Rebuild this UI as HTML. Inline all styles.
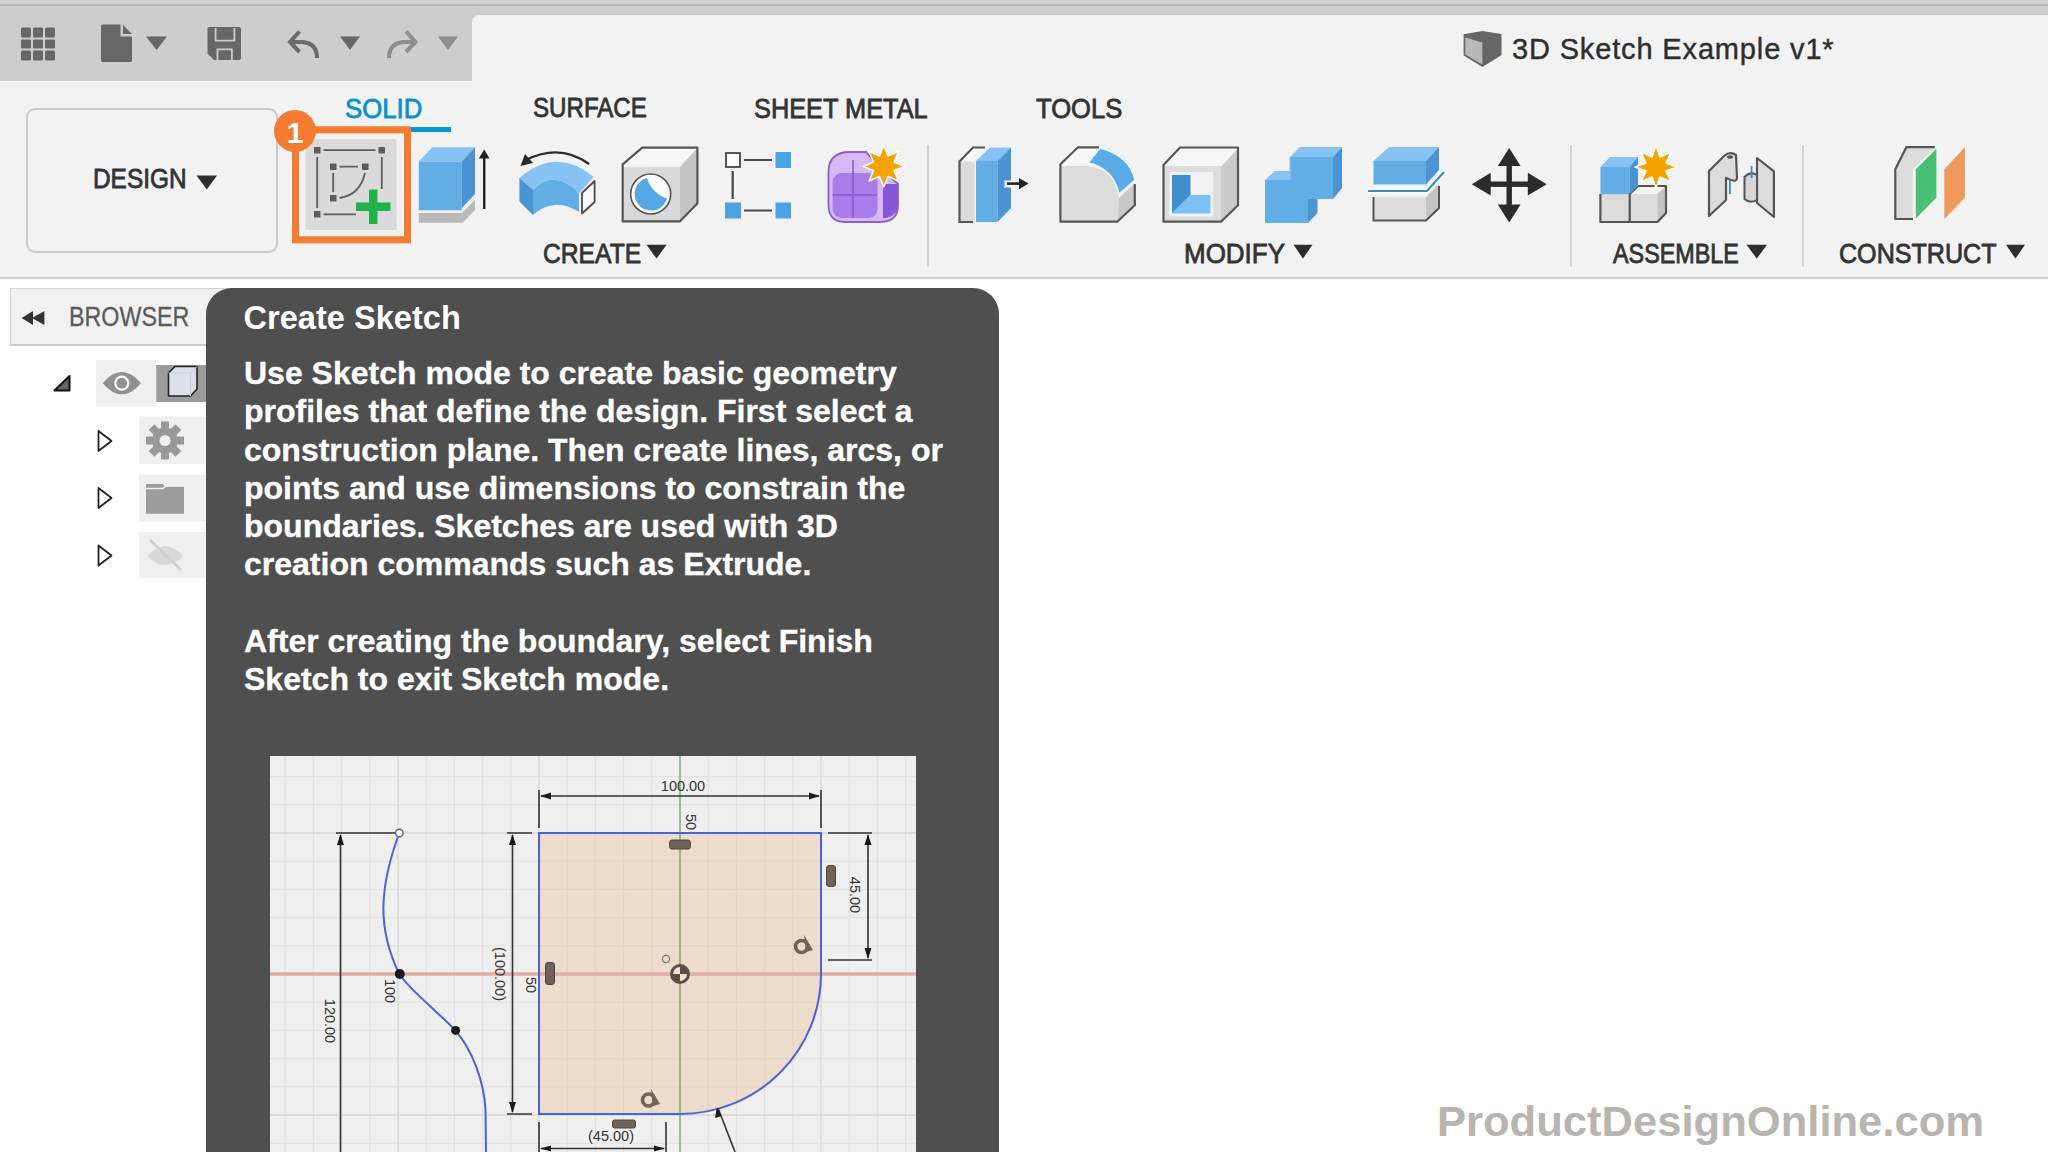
<!DOCTYPE html>
<html><head><meta charset="utf-8">
<style>
html,body{margin:0;padding:0;}
body{width:2048px;height:1152px;overflow:hidden;position:relative;background:#ffffff;font-family:"Liberation Sans",sans-serif;}
.a{position:absolute;white-space:nowrap;}
#topbar{left:0;top:0;width:2048px;height:81px;background:#cdcdcd;}
#topline{left:0;top:4px;width:2048px;height:2px;background:#b4b4b4;}
#toptop{left:0;top:0;width:2048px;height:4px;background:#d2d2d2;}
#tab{left:472px;top:15px;width:1576px;height:70px;background:#f2f2f2;border-top-left-radius:7px;}
#toolbar{left:0;top:81px;width:2048px;height:196px;background:#f2f2f2;}
#tbline{left:0;top:277px;width:2048px;height:1.5px;background:#d0d0d0;}
#design{left:26px;top:108px;width:248px;height:141px;border:2px solid #cacaca;border-radius:9px;background:#f2f2f2;}
.lb{font-size:27px;line-height:30px;transform-origin:0 0;-webkit-text-stroke:0.8px currentColor;}
.tt{color:#ffffff;font-weight:bold;font-size:32px;line-height:38.2px;-webkit-text-stroke:0.35px #fff;}
#tip{left:206px;top:288px;width:793px;height:900px;background:#4f4f4f;border-radius:26px;}
#browser{left:10px;top:288px;width:230px;height:55px;background:#f1f1f1;border:1px solid #d4d4d4;border-bottom:2px solid #cbcbcb;}
#wm{font-size:42.5px;transform-origin:0 0;transform:scaleX(1.025);font-weight:bold;color:#b8b4af;line-height:50px;}
</style></head><body>
<div class="a" id="topbar"></div>
<div class="a" id="toptop"></div>
<div class="a" id="topline"></div>
<div class="a" id="tab"></div>
<div class="a" id="toolbar"></div>
<div class="a" id="tbline"></div>
<div class="a" id="design"></div>
<svg class="a" style="left:0;top:0;" width="2048" height="290" viewBox="0 0 2048 290">
<!-- top bar icons -->
<g fill="#676767">
<rect x="21" y="27.5" width="10" height="10" rx="1.5"/><rect x="33" y="27.5" width="10" height="10" rx="1"/><rect x="45" y="27.5" width="10" height="10" rx="1.5"/>
<rect x="21" y="39.5" width="10" height="9" rx="1"/><rect x="33" y="39.5" width="10" height="9" rx="1"/><rect x="45" y="39.5" width="10" height="9" rx="1"/>
<rect x="21" y="50.5" width="10" height="10" rx="1.5"/><rect x="33" y="50.5" width="10" height="10" rx="1"/><rect x="45" y="50.5" width="10" height="10" rx="1.5"/>
<path d="M101,26 Q101,24.5 102.5,24.5 L120.5,24.5 L120.5,36.5 L132,36.5 L132,60.5 Q132,62 130.5,62 L102.5,62 Q101,62 101,60.5 Z"/>
<path d="M123,25 L132,34 L123,34 Z"/>
<path d="M146,36.5 L167,36.5 L156.5,50 Z"/>
<path d="M207.5,29 Q207.5,27 209.5,27 L239,27 Q241,27 241,29 L241,58 Q241,60 239,60 L214,60 L207.5,53.5 Z"/>
<path d="M340,36.5 L360,36.5 L350,50 Z"/>
</g>
<path d="M215.6,28 L215.6,40.6 L234.4,40.6 L234.4,28" fill="none" stroke="#cdcdcd" stroke-width="1.8"/>
<path d="M217.5,60 L217.5,49.4 L231.9,49.4 L231.9,60" fill="none" stroke="#cdcdcd" stroke-width="1.8"/>
<path d="M299.5,31.5 L290,42 L299.5,52 M291,42 L302,42 Q317,43 317,58" fill="none" stroke="#6b6b6b" stroke-width="4"/>
<path d="M406,31.5 L415.5,42 L406,52 M414.5,42 L404,42 Q389,43 389,58" fill="none" stroke="#8e8e8e" stroke-width="4"/>
<path d="M438,36.5 L458,36.5 L448,50 Z" fill="#8e8e8e"/>
<!-- title cube -->
<path d="M1482.3,31 L1463.6,34.3 L1463.6,55.5 L1482.5,67 L1501.5,55 L1501.5,33.9 Z" fill="#666"/>
<path d="M1465.3,37.5 L1482.3,42.6 L1482.3,64.5 L1465.3,54.5 Z" fill="#b9b9b9"/>

<!-- solid underline -->
<rect x="318" y="127" width="133" height="5" fill="#0a94d6"/>
<!-- sketch icon -->
<rect x="305.5" y="139" width="91" height="91" fill="#dadada"/>
<g fill="#5e5e5e">
<rect x="314" y="147" width="6.5" height="6.5"/><rect x="378.5" y="147" width="6.5" height="6.5"/><rect x="314" y="211" width="6.5" height="6.5"/>
<rect x="330" y="163.5" width="6.5" height="6.5"/><rect x="362" y="163.5" width="6.5" height="6.5"/><rect x="330" y="195" width="6.5" height="6.5"/>
</g>
<path d="M323.5,150.2 L375.5,150.2 M317.2,157 L317.2,208 M323.5,214.3 L356,214.3 M381.8,157 L381.8,189 M339.5,166.7 L358,166.7 M333.2,173 L333.2,192 M339.5,198 Q360,195 365,173" fill="none" stroke="#5e5e5e" stroke-width="1.8"/>
<path d="M356,202.5 h13 v-13 h8.5 v13 h13 v8.5 h-13 v13 h-8.5 v-13 h-13 Z" fill="#22b14c"/>
<!-- orange highlight box -->
<rect x="295.5" y="129.8" width="112" height="110" fill="none" stroke="#f47b30" stroke-width="7"/>
<circle cx="295" cy="131" r="21" fill="#f47b30"/>
<text x="295" y="142.5" text-anchor="middle" font-family="Liberation Sans" font-weight="bold" font-size="30" fill="#fff">1</text>

<!-- extrude -->
<path d="M418.8,213 L461.8,213 L475,200 L475,210 L462.5,222.7 L418.8,222.7 Z" fill="#b9b9b9"/>
<path d="M418.8,161.4 L432.5,147.2 L475,147.2 L461.8,161.4 Z" fill="#86c3f2"/>
<path d="M418.8,161.4 L461.8,161.4 L461.8,210.2 L418.8,210.2 Z" fill="#63ade6"/>
<path d="M461.8,161.4 L475,147.2 L475,194 L461.8,208 Z" fill="#4a94d4"/>
<path d="M484.2,209 L484.2,157" stroke="#222" stroke-width="2.4"/>
<path d="M478.8,158.5 L489.6,158.5 L484.2,149.6 Z" fill="#222"/>
<!-- revolve -->
<path d="M589,164 Q560,143 526,160" fill="none" stroke="#2a2a2a" stroke-width="2.4"/>
<path d="M520.5,166 L525,154 L533,163 Z" fill="#2a2a2a"/>
<path d="M519.4,178 Q556.5,146 593.6,177 L578.9,193.6 Q556,168 533,189.7 Z" fill="#86c3f2"/>
<path d="M533,189.7 Q556,168 578.9,193.6 L579,212 Q554,196 533,215 Z" fill="#63ade6"/>
<path d="M519.4,178 L533,189.7 L533,215 L519.4,201.4 Z" fill="#4a94d4"/>
<path d="M582,193 L594.6,181 L594.6,202 L582,213.5 Z" fill="#fafafa" stroke="#4a4a4a" stroke-width="1.8" stroke-linejoin="round"/>
<!-- hole -->
<path d="M623.5,165 L642.5,148.5 L697,148.5 L680,167 Z" fill="#f6f6f6"/>
<path d="M623.5,167 L680,167 L680,221 L623.5,221 Z" fill="#d9d9d9"/>
<path d="M680,167 L697,148.5 L697,203 L680,221 Z" fill="#c4c4c4"/>
<path d="M622.7,164.3 L642.2,147.7 L697.4,147.7 L697.4,203.4 L679.8,221.4 L622.7,221.4 Z" fill="none" stroke="#555" stroke-width="2.2" stroke-linejoin="round"/>
<circle cx="650.7" cy="194" r="20" fill="#fbfbfb" stroke="#555" stroke-width="1.6"/>
<path d="M647,178 A16.5,16.5 0 1 0 667,198.5 A30,30 0 0 1 647,178 Z" fill="#55a7e6"/>
<!-- rect pattern -->
<rect x="726" y="153" width="14" height="14" fill="#fff" stroke="#555" stroke-width="2"/>
<g fill="#4ba3e3"><rect x="775.5" y="152" width="15.5" height="16"/><rect x="725" y="202.5" width="16" height="16"/><rect x="775.5" y="202.5" width="15.5" height="16"/></g>
<path d="M744,160 L772,160 M732.7,171 L732.7,199 M744,210.5 L772,210.5" stroke="#474747" stroke-width="2.2"/>
<!-- form -->
<path d="M828.5,172 Q828.5,152 850,152 L866,152 L878,166 L898,184 L898,205 Q898,222 880,222 L845,222 Q828.5,222 828.5,205 Z" fill="#d9b8fa" stroke="#8c5fc8" stroke-width="1.8"/>
<rect x="832.6" y="173" width="45" height="45" rx="9" fill="#a97cea"/>
<path d="M883,184 L898,184 L898,205 Q898,215 886,218 L883,218 Z" fill="#8756d6"/>
<path d="M853,160 L853,218 M832.6,195 L877,195" stroke="#8558cc" stroke-width="1.5"/>
<polygon points="883.8,147.5 888,158 898.5,153.5 894,164 904.5,168.5 894,172.5 898.5,183 888,178.5 883.8,189 879.5,178.5 869,183 873.5,172.5 863,168.5 873.5,164 869,153.5 879.5,158" fill="#f5a300" stroke="#fff" stroke-width="1.5" stroke-linejoin="round" transform="translate(0,-2)"/>
<!-- divider -->
<rect x="927.2" y="145" width="1.6" height="122" fill="#cbcbcb"/>
<rect x="1570.2" y="145" width="1.6" height="122" fill="#cbcbcb"/>
<rect x="1802.2" y="145" width="1.6" height="122" fill="#cbcbcb"/>
<!-- press pull -->
<path d="M959.5,161.5 L973,147.5 L985,147.5 L975,161.5 Z" fill="#f6f6f6"/>
<path d="M959.5,161.5 L975,161.5 L975,222 L959.5,222 Z" fill="#dcdcdc"/>
<path d="M985,147.5 L973,147.5 L959.5,161.5 L959.5,222 L973,222" fill="none" stroke="#555" stroke-width="2.2"/>
<path d="M976,161 L990,147.5 L1011,147.5 L1011,208 L997.6,222 L976,222 Z" fill="none" stroke="#eef7ff" stroke-width="2.5" stroke-linejoin="round"/>
<path d="M976,161 L990,147.5 L1011,147.5 L997.6,161 Z" fill="#86c3f2"/>
<rect x="976" y="161" width="21.6" height="61" fill="#63ade6"/>
<path d="M997.6,161 L1011,147.5 L1011,208 L997.6,222 Z" fill="#4a94d4"/>
<rect x="1004.5" y="180.5" width="7" height="7" fill="#f4f9ff"/>
<path d="M1007,183.6 L1020,183.6" stroke="#222" stroke-width="2.6"/>
<path d="M1019,178 L1028.5,183.6 L1019,189.2 Z" fill="#222"/>
<!-- fillet -->
<path d="M1062,165.5 L1078.5,148.5 L1099,148.5 L1088,163 Z" fill="#f6f6f6"/>
<path d="M1061.5,166 L1088,166 Q1116,170 1119,198 L1119,221 L1061.5,221 Z" fill="#dcdcdc"/>
<path d="M1119,198 L1134,184 L1134,205 L1118,221 Z" fill="#c8c8c8"/>
<path d="M1088,163 L1100,148 Q1130,156 1135,180 L1119,194 Q1113,168 1088,163 Z" fill="#5aaae6" stroke="#eaf6ff" stroke-width="1.5"/>
<path d="M1099,147.3 L1078,147.3 L1060.4,164.3 L1060.4,221.7 L1117.2,221.7 L1134.8,205.3 L1134.8,184" fill="none" stroke="#555" stroke-width="2.2" stroke-linejoin="round"/>
<!-- shell -->
<path d="M1164,165 L1180,148.5 L1238,148.5 L1221,167 Z" fill="#f6f6f6"/>
<rect x="1164" y="166" width="57" height="55" fill="#dcdcdc"/>
<path d="M1221,167 L1238,148.5 L1238,205 L1221,221 Z" fill="#cacaca"/>
<rect x="1170" y="172.5" width="42.7" height="43.4" fill="#f2f2f2" stroke="#eaf6ff" stroke-width="1"/>
<path d="M1172,175 L1190.5,175 L1190.5,195 L1172,213.5 Z" fill="#3f8fd0"/>
<path d="M1172,213.5 L1190.5,195 L1210.5,195 L1210.5,213.5 Z" fill="#7cc0f5"/>
<path d="M1163.5,164.9 L1180,147.5 L1238,147.5 L1238,205.3 L1221,221.7 L1163.5,221.7 Z" fill="none" stroke="#555" stroke-width="2.2" stroke-linejoin="round"/>
<!-- combine -->
<path d="M1290,157 L1300,147 L1342,147 L1333,157 Z" fill="#86c3f2"/>
<rect x="1290" y="157" width="43" height="42" fill="#63ade6"/>
<path d="M1333,157 L1342,147 L1342,188 L1333,199 Z" fill="#4a94d4"/>
<path d="M1265,180 L1275,171 L1290,171 L1290,180 Z" fill="#86c3f2"/>
<rect x="1265" y="180" width="43" height="43" fill="#63ade6"/>
<path d="M1308,199 L1317.5,199 L1317.5,213 L1308,223 Z" fill="#4a94d4"/>
<path d="M1290,157 L1290,180" stroke="#86c3f2" stroke-width="1"/>
<!-- split body -->
<path d="M1373.5,161 L1389,147 L1439,147 L1426,161 Z" fill="#86c3f2"/>
<rect x="1373.5" y="161" width="52.5" height="23.5" fill="#63ade6"/>
<path d="M1426,161 L1439,147 L1439,170 L1426,184.5 Z" fill="#4a94d4"/>
<path d="M1373.5,197 L1426,197 L1426,220 L1373.5,220 Z" fill="#dcdcdc"/>
<path d="M1426,197 L1439,184 L1439,208 L1426,220 Z" fill="#c4c4c4"/>
<path d="M1373.5,197 L1373.5,220.5 L1426,220.5 L1439,208 L1439,186" fill="none" stroke="#555" stroke-width="2"/>
<path d="M1368,191 L1427,191 L1444,172" fill="none" stroke="#fff" stroke-width="5"/>
<path d="M1368,191 L1427,191 L1444,172" fill="none" stroke="#3a8ad0" stroke-width="2.2"/>
<!-- move -->
<g fill="#2b2b2b">
<rect x="1506.5" y="163" width="5.4" height="42"/><rect x="1488" y="181.5" width="42" height="5.4"/>
<path d="M1509.2,148 L1520.6,166 L1497.8,166 Z"/><path d="M1509.2,222.5 L1520.6,204.5 L1497.8,204.5 Z"/>
<path d="M1471.8,184.2 L1490.7,172.8 L1490.7,195.6 Z"/><path d="M1546.7,184.2 L1527.8,172.8 L1527.8,195.6 Z"/>
</g>
<!-- new component -->
<path d="M1600.4,194 L1629.7,194 L1629.7,222 L1600.4,222 Z" fill="#dcdcdc"/>
<path d="M1630,194 L1638,186 L1666,186 L1657.5,194 Z" fill="#f4f4f4"/>
<rect x="1630" y="194" width="27.5" height="28" fill="#dcdcdc"/>
<path d="M1657.5,194 L1666,186 L1666,213 L1657.5,222 Z" fill="#c4c4c4"/>
<path d="M1600.4,194 L1600.4,222 L1657.5,222 L1666,213 L1666,186 L1638,186 L1629.7,194 L1629.7,222" fill="none" stroke="#555" stroke-width="2.2" stroke-linejoin="round"/>
<path d="M1600.4,167 L1610,157 L1638,157 L1630,167 Z" fill="#86c3f2"/>
<rect x="1600.4" y="167" width="29.3" height="27.2" fill="#63ade6"/>
<path d="M1629.7,167 L1638,157 L1638,186 L1629.7,194 Z" fill="#4a94d4"/>
<polygon points="1656,147.5 1660,159 1671,154 1666,165 1677,169 1666,173 1671,184 1660,179 1656,190 1652,179 1641,184 1646,173 1635,169 1646,165 1641,154 1652,159" fill="#f5a300" stroke="#fff" stroke-width="1.5" stroke-linejoin="round" transform="translate(0,-2)"/>
<!-- joint -->
<path d="M1709,171 L1724,156 Q1730,151 1736,155 L1737,178 Q1737,182 1731,180 L1726,178 L1726,200 L1709,216 Z" fill="#dcdcdc" stroke="#555" stroke-width="2.2" stroke-linejoin="round"/>
<ellipse cx="1730" cy="157" rx="3" ry="1.8" fill="#555"/>
<path d="M1757,158 L1773.9,171.3 L1773.9,217 L1757,203 Z" fill="#dcdcdc" stroke="#555" stroke-width="2.2" stroke-linejoin="round"/>
<path d="M1744.5,177 L1744.5,199 Q1750,204 1757,200 L1757,175 Q1750,171 1744.5,177 Z" fill="#d6d6d6" stroke="#555" stroke-width="2"/>
<path d="M1729.9,181 L1729.9,194 M1751.6,166 L1751.6,178" stroke="#3b8ad2" stroke-width="1.8"/>
<!-- construct -->
<path d="M1895.3,169.3 L1906.3,147.2 L1934.8,147.2 L1912.7,169.3 L1912.7,219 L1895.3,219 Z" fill="#dcdcdc"/>
<path d="M1934.8,147.2 L1906.3,147.2 L1895.3,169.3 L1895.3,219 L1913,219" fill="none" stroke="#555" stroke-width="2.2" stroke-linejoin="round"/>
<path d="M1915.8,169.3 L1936.4,148.7 L1936.4,197.8 L1915.8,218.4 Z" fill="#47c072"/>
<path d="M1944.3,169.3 L1964.9,147.2 L1964.9,197.8 L1944.3,219 Z" fill="#ef9a5a"/>
<!-- dropdown triangles -->
<g fill="#2e2e2e">
<path d="M196.5,175.5 L217,175.5 L206.8,189.5 Z"/>
<path d="M646.5,244.8 L666.6,244.8 L656.5,258.6 Z"/>
<path d="M1293.5,244.8 L1312.5,244.8 L1303,258.6 Z"/>
<path d="M1746.5,244.8 L1767,244.8 L1756.8,258.6 Z"/>
<path d="M2006,244.8 L2025,244.8 L2015.5,258.6 Z"/>
</g>
</svg>

<div class="a lb" style="left:93.2px;top:164.2px;transform:scaleX(0.9036);color:#333333;">DESIGN</div>
<div class="a lb" style="left:345.2px;top:93.6px;transform:scaleX(0.954);color:#0a90d2;">SOLID</div>
<div class="a lb" style="left:532.9px;top:93.3px;transform:scaleX(0.8926);color:#333333;">SURFACE</div>
<div class="a lb" style="left:754.2px;top:93.5px;transform:scaleX(0.9385);color:#333333;">SHEET METAL</div>
<div class="a lb" style="left:1036.4px;top:93.5px;transform:scaleX(0.9474);color:#333333;">TOOLS</div>
<div class="a lb" style="left:542.8px;top:238.5px;transform:scaleX(0.9133);color:#333333;">CREATE</div>
<div class="a lb" style="left:1184.0px;top:238.5px;transform:scaleX(0.9623);color:#333333;">MODIFY</div>
<div class="a lb" style="left:1613.4px;top:238.5px;transform:scaleX(0.8647);color:#333333;">ASSEMBLE</div>
<div class="a lb" style="left:1839.0px;top:238.5px;transform:scaleX(0.9292);color:#333333;">CONSTRUCT</div>
<div class="a" style="left:1512px;top:31px;font-size:29px;letter-spacing:0.85px;color:#2e2e2e;-webkit-text-stroke:0.4px #2e2e2e;line-height:36px;">3D Sketch Example v1*</div>

<div class="a" id="browser"></div>
<div class="a lb" style="left:68.5px;top:302.1px;transform:scaleX(0.862);color:#5a5a5a;-webkit-text-stroke:0.3px #5a5a5a;">BROWSER</div>
<svg class="a" style="left:0;top:280px;" width="210" height="320" viewBox="0 280 210 320">
<path d="M21.6,318 L33,311 L33,325 Z M32,318 L44.4,311 L44.4,325 Z" fill="#333"/>
<path d="M54.5,390.5 L69.5,376 L69.5,390.5 Z" fill="#666" stroke="#111" stroke-width="2" stroke-linejoin="round"/>
<rect x="96" y="360" width="60" height="46.5" fill="#efefef"/>
<path d="M102.7,383.2 Q121.8,361 141,383.2 Q121.8,405.5 102.7,383.2 Z" fill="#909090"/>
<circle cx="121.8" cy="383.2" r="6.5" fill="none" stroke="#fff" stroke-width="2.2"/>
<rect x="156.2" y="365" width="50" height="37" fill="#9b9b9b"/>
<path d="M168.5,373 L175,366.5 L197,366.5 L197,389 L190.5,396 L168.5,396 Z" fill="#dde0e8" stroke="#222" stroke-width="1.6" stroke-linejoin="round"/>
<path d="M168.5,373 L190.5,373 L190.5,396 M190.5,373 L197,366.5" fill="none" stroke="#c6cbd6" stroke-width="1"/>
<path d="M98.5,431 L111.5,441 L98.5,451 Z" fill="none" stroke="#222" stroke-width="1.8" stroke-linejoin="round"/>
<path d="M98.5,488 L111.5,498 L98.5,508 Z" fill="none" stroke="#222" stroke-width="1.8" stroke-linejoin="round"/>
<path d="M98.5,545.5 L111.5,555.5 L98.5,565.5 Z" fill="none" stroke="#222" stroke-width="1.8" stroke-linejoin="round"/>
<rect x="139" y="416.5" width="67" height="47.5" fill="#efefef"/>
<rect x="139" y="474.5" width="67" height="47" fill="#efefef"/>
<rect x="139" y="532" width="67" height="46" fill="#efefef"/>
<g transform="translate(165,440.5)" fill="#999">
<circle r="13"/>
<g id="teeth"><rect x="-4" y="-19" width="8" height="9"/><rect x="-4" y="10" width="8" height="9"/><rect x="-19" y="-4" width="9" height="8"/><rect x="10" y="-4" width="9" height="8"/></g>
<g transform="rotate(45)"><rect x="-4" y="-19" width="8" height="9"/><rect x="-4" y="10" width="8" height="9"/><rect x="-19" y="-4" width="9" height="8"/><rect x="10" y="-4" width="9" height="8"/></g>
<circle r="5.5" fill="#efefef"/>
</g>
<path d="M146,484 L163,484 L165,486.5 L184,486.5 L184,513.7 L146,513.7 Z" fill="#9c9c9c"/>
<path d="M146,488.5 L163,488.5 L166,486 L184,486" fill="none" stroke="#efefef" stroke-width="1.6"/>
<path d="M147,556 Q165,536 183,556 Q165,574 147,556 Z" fill="#d8d8d8"/>
<path d="M150,540 L181,570" stroke="#d0d0d0" stroke-width="3"/>
</svg>


<div class="a" id="tip"></div>
<div class="a tt" style="left:243.5px;top:299px;font-size:32.6px;-webkit-text-stroke:0;">Create Sketch</div>
<div class="a tt" style="left:244px;top:354.2px;">Use Sketch mode to create basic geometry<br>profiles that define the design. First select a<br>construction plane. Then create lines, arcs, or<br>points and use dimensions to constrain the<br>boundaries. Sketches are used with 3D<br>creation commands such as Extrude.<br><br>After creating the boundary, select Finish<br>Sketch to exit Sketch mode.</div>

<svg class="a" style="left:0;top:0;" width="2048" height="1152" viewBox="0 0 2048 1152">
<rect x="270" y="756" width="646" height="396" fill="#efefef"/>
<path d="M285.2,756 L285.2,1152" stroke="#e0e0e0" stroke-width="1"/>
<path d="M313.4,756 L313.4,1152" stroke="#e0e0e0" stroke-width="1"/>
<path d="M341.6,756 L341.6,1152" stroke="#e0e0e0" stroke-width="1"/>
<path d="M369.8,756 L369.8,1152" stroke="#e0e0e0" stroke-width="1"/>
<path d="M398.0,756 L398.0,1152" stroke="#d6d6d6" stroke-width="1.3"/>
<path d="M426.2,756 L426.2,1152" stroke="#e0e0e0" stroke-width="1"/>
<path d="M454.4,756 L454.4,1152" stroke="#e0e0e0" stroke-width="1"/>
<path d="M482.6,756 L482.6,1152" stroke="#e0e0e0" stroke-width="1"/>
<path d="M510.8,756 L510.8,1152" stroke="#e0e0e0" stroke-width="1"/>
<path d="M539.0,756 L539.0,1152" stroke="#d6d6d6" stroke-width="1.3"/>
<path d="M567.2,756 L567.2,1152" stroke="#e0e0e0" stroke-width="1"/>
<path d="M595.4,756 L595.4,1152" stroke="#e0e0e0" stroke-width="1"/>
<path d="M623.6,756 L623.6,1152" stroke="#e0e0e0" stroke-width="1"/>
<path d="M651.8,756 L651.8,1152" stroke="#e0e0e0" stroke-width="1"/>
<path d="M708.2,756 L708.2,1152" stroke="#e0e0e0" stroke-width="1"/>
<path d="M736.4,756 L736.4,1152" stroke="#e0e0e0" stroke-width="1"/>
<path d="M764.6,756 L764.6,1152" stroke="#e0e0e0" stroke-width="1"/>
<path d="M792.8,756 L792.8,1152" stroke="#e0e0e0" stroke-width="1"/>
<path d="M821.0,756 L821.0,1152" stroke="#d6d6d6" stroke-width="1.3"/>
<path d="M849.2,756 L849.2,1152" stroke="#e0e0e0" stroke-width="1"/>
<path d="M877.4,756 L877.4,1152" stroke="#e0e0e0" stroke-width="1"/>
<path d="M905.6,756 L905.6,1152" stroke="#e0e0e0" stroke-width="1"/>
<path d="M270,776.6 L916,776.6" stroke="#e0e0e0" stroke-width="1"/>
<path d="M270,804.8 L916,804.8" stroke="#e0e0e0" stroke-width="1"/>
<path d="M270,833.0 L916,833.0" stroke="#d6d6d6" stroke-width="1.3"/>
<path d="M270,861.2 L916,861.2" stroke="#e0e0e0" stroke-width="1"/>
<path d="M270,889.4 L916,889.4" stroke="#e0e0e0" stroke-width="1"/>
<path d="M270,917.6 L916,917.6" stroke="#e0e0e0" stroke-width="1"/>
<path d="M270,945.8 L916,945.8" stroke="#e0e0e0" stroke-width="1"/>
<path d="M270,1002.2 L916,1002.2" stroke="#e0e0e0" stroke-width="1"/>
<path d="M270,1030.4 L916,1030.4" stroke="#e0e0e0" stroke-width="1"/>
<path d="M270,1058.6 L916,1058.6" stroke="#e0e0e0" stroke-width="1"/>
<path d="M270,1086.8 L916,1086.8" stroke="#e0e0e0" stroke-width="1"/>
<path d="M270,1115.0 L916,1115.0" stroke="#d6d6d6" stroke-width="1.3"/>
<path d="M270,1143.2 L916,1143.2" stroke="#e0e0e0" stroke-width="1"/>
<path d="M539,833 L821,833 L821,974 A141,140 0 0 1 680,1114 L539,1114 Z" fill="#eac29a" fill-opacity="0.42"/>
<path d="M270,974 L916,974" stroke="#e2aca2" stroke-width="3.4"/>
<path d="M680,756 L680,1152" stroke="#62a64e" stroke-width="1.3"/>
<path d="M539,833 L821,833 L821,974 A141,140 0 0 1 680,1114 L539,1114 Z" fill="none" stroke="#4a62dc" stroke-width="2"/>
<path d="M399.3,833 C393,850 384,880 383.4,906 C383,930 390,955 399.3,974.2 C410,990 438,1012 455.4,1030.4 C472,1050 484,1080 485.5,1110 L486,1152" fill="none" stroke="#4a62dc" stroke-width="2"/>
<g stroke="#333" stroke-width="1.6" fill="none">
<path d="M336,833 L396,833 M340.5,835 L340.5,1152"/>
<path d="M507,833 L532,833 M512.5,835 L512.5,1112 M507,1114 L532,1114"/>
<path d="M539,790 L539,828 M821,790 L821,828 M541,796 L819,796"/>
<path d="M828,833 L872,833 M828,960 L872,960 M868,835 L868,958"/>
<path d="M539,1122 L539,1152 M666,1122 L666,1152 M541,1148.5 L664,1148.5"/>
<path d="M718,1108 L735,1152"/>
</g>
<g fill="#1a1a1a">
<path d="M340.5,834 L337,845 L344,845 Z"/>
<path d="M512.5,834 L509,845 L516,845 Z"/><path d="M512.5,1113 L509,1102 L516,1102 Z"/>
<path d="M540,796 L551,792.5 L551,799.5 Z"/><path d="M820,796 L809,792.5 L809,799.5 Z"/>
<path d="M868,834 L864.5,845 L871.5,845 Z"/><path d="M868,959 L864.5,948 L871.5,948 Z"/>
<path d="M717,1107 L715,1118 L721.5,1116 Z"/><path d="M540,1148.5 L551,1145.5 L551,1151.5 Z"/><path d="M665,1148.5 L654,1145.5 L654,1151.5 Z"/>
<circle cx="399.8" cy="974" r="5"/><circle cx="455.6" cy="1030.4" r="4.5"/>
</g>
<circle cx="399.3" cy="833" r="3.8" fill="#f4f4f4" stroke="#666" stroke-width="1.4"/>
<circle cx="666" cy="959" r="3.6" fill="none" stroke="#777" stroke-width="1.3"/>
<circle cx="680" cy="974" r="8.5" fill="#efe3d6" stroke="#5a4f45" stroke-width="3"/>
<path d="M680,965.5 A8.5,8.5 0 0 1 688.5,974 L680,974 Z M680,982.5 A8.5,8.5 0 0 1 671.5,974 L680,974 Z" fill="#5a4f45"/>
<g fill="#6e6358" stroke="#4e463e" stroke-width="1">
<rect x="669.5" y="840" width="21" height="9" rx="2.5"/>
<rect x="826.5" y="865.5" width="9" height="21" rx="2.5"/>
<rect x="545.5" y="962.5" width="9" height="22" rx="2.5"/>
<rect x="612.5" y="1120" width="23" height="8" rx="2"/>
</g>
<g fill="none" stroke="#6e6358" stroke-width="3.6">
<circle cx="801.5" cy="946.5" r="6"/>
<circle cx="648.5" cy="1100" r="6"/>
</g>
<g fill="#6e6358"><path d="M804,935 L813,950 L806,952 Z"/><path d="M651,1089 L660,1104 L653,1106 Z"/></g>
<g font-family="Liberation Sans" font-size="14.5" fill="#333">
<text x="683" y="791" text-anchor="middle">100.00</text>
<text transform="translate(686,822) rotate(90)" text-anchor="middle">50</text>
<text transform="translate(850,895) rotate(90)" text-anchor="middle">45.00</text>
<text transform="translate(325,1021) rotate(90)" text-anchor="middle">120.00</text>
<text transform="translate(385,991) rotate(90)" text-anchor="middle">100</text>
<text transform="translate(495,974) rotate(90)" text-anchor="middle">(100.00)</text>
<text transform="translate(526,985) rotate(90)" text-anchor="middle">50</text>
<text x="611" y="1141" text-anchor="middle">(45.00)</text>
</g>
</svg>


<div class="a" id="wm" style="left:1437px;top:1097px;">ProductDesignOnline.com</div>
</body></html>
